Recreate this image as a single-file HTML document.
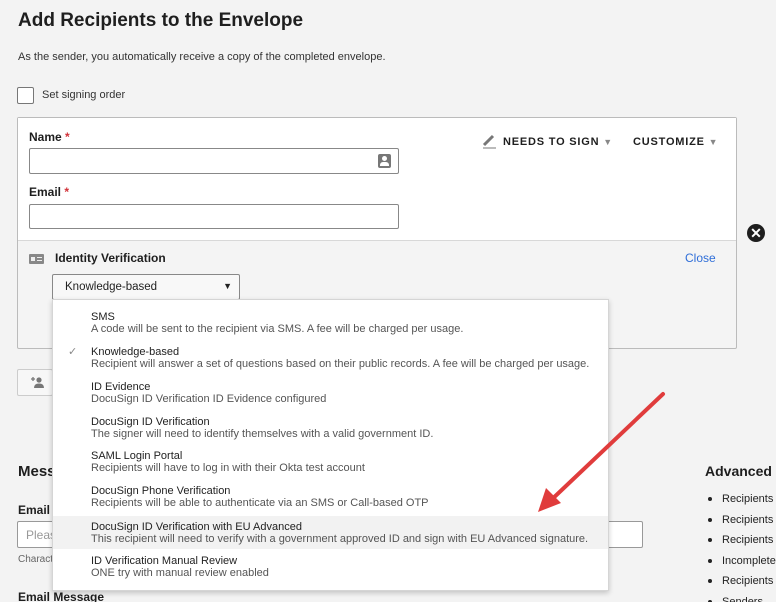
<!DOCTYPE html>
<html><head><style>
*{margin:0;padding:0;box-sizing:border-box}
html,body{width:776px;height:602px;overflow:hidden}
body{background:#f3f3f3;font-family:"Liberation Sans",sans-serif;color:#222;position:relative}
.a{position:absolute}
h1{position:absolute;left:18px;top:10px;font-size:19px;font-weight:bold;color:#1e1e1e}
.lbl{font-size:12px;font-weight:bold;color:#1e1e1e}
.req{color:#d13239}
.inp{position:absolute;background:#fff;border:1px solid #888;border-radius:2px}
.menu{position:absolute;left:52px;top:299px;width:557px;height:292px;background:#fff;border:1px solid #d5d5d5;box-shadow:0 2px 5px rgba(0,0,0,.2)}
.it{position:absolute;left:0;width:555px;height:35px;font-size:11px;color:#333;padding-left:38px;line-height:12px}
.it b{font-weight:normal;color:#222;display:block;padding-top:5px}
.it span{color:#555}
.ul li{font-size:11px;color:#222;margin-bottom:8.5px;list-style:none;position:relative;padding-left:17px}
.ul li:before{content:"";position:absolute;left:3px;top:4px;width:4px;height:4px;border-radius:50%;background:#222}
</style></head><body>
<h1>Add Recipients to the Envelope</h1>
<div class="a" style="left:18px;top:51px;font-size:11px;color:#333">As the sender, you automatically receive a copy of the completed envelope.</div>
<div class="a" style="left:17px;top:87px;width:17px;height:17px;border:1px solid #777;border-radius:2px;background:#fff"></div>
<div class="a" style="left:42px;top:89px;font-size:11px;color:#333">Set signing order</div>

<div class="a" style="left:17px;top:117px;width:720px;height:232px;border:1px solid #bbb;border-radius:2px;background:#f4f4f4">
  <div class="a" style="left:0;top:0;width:718px;height:123px;background:#fff;border-bottom:1px solid #d8d8d8"></div>
</div>
<div class="a lbl" style="left:29px;top:130px">Name <span class="req">*</span></div>
<div class="inp" style="left:29px;top:148px;width:370px;height:26px"></div>
<div class="a" style="left:378px;top:154px;width:13px;height:14px;background:#777;border-radius:2px"><div class="a" style="left:4px;top:2px;width:5px;height:5px;border-radius:50%;background:#fff"></div><div class="a" style="left:2px;top:8px;width:9px;height:4px;border-radius:3px 3px 0 0;background:#fff"></div></div>
<div class="a lbl" style="left:29px;top:185px">Email <span class="req">*</span></div>
<div class="inp" style="left:29px;top:204px;width:370px;height:25px"></div>
<svg class="a" style="left:481px;top:133px" width="16" height="16"><path d="M3 12 L12 3" stroke="#777" stroke-width="3"/><path d="M2 15 H15" stroke="#777" stroke-width="1"/></svg>
<div class="a" style="left:503px;top:136px;font-size:11px;font-weight:bold;letter-spacing:.8px;color:#1e1e1e">NEEDS TO SIGN <span style="color:#888;font-size:9px">▼</span></div>
<div class="a" style="left:633px;top:136px;font-size:11px;font-weight:bold;letter-spacing:.8px;color:#1e1e1e">CUSTOMIZE <span style="color:#888;font-size:9px">▼</span></div>
<div class="a" style="left:747px;top:224px;width:18px;height:18px;border-radius:50%;background:#1e1e1e;color:#fff;font-size:14px;font-weight:bold;text-align:center;line-height:18px">✕</div>
<div class="a" style="left:29px;top:254px;width:15px;height:10px;background:#888;border-radius:1px"><div class="a" style="left:2px;top:3px;width:4px;height:4px;background:#eee"></div><div class="a" style="left:8px;top:3px;width:5px;height:1px;background:#eee"></div><div class="a" style="left:8px;top:6px;width:5px;height:1px;background:#eee"></div></div>
<div class="a lbl" style="left:55px;top:251px">Identity Verification</div>
<div class="a" style="left:685px;top:251px;font-size:12px;color:#2f6ed8">Close</div>
<div class="a" style="left:52px;top:274px;width:188px;height:26px;background:#f8f8f8;border:1px solid #888;border-radius:2px;font-size:11.5px;color:#222;padding:6px 0 0 12px">Knowledge-based<span class="a" style="right:7px;top:6px;font-size:9px">▼</span></div>

<div class="a" style="left:17px;top:369px;width:36px;height:27px;border:1px solid #ccc;background:#f7f7f7;border-radius:2px">
<svg class="a" style="left:12px;top:6px" width="16" height="14"><path d="M1 3 H5 M3 1 V5" stroke="#777" stroke-width="1.3"/><circle cx="9" cy="4" r="2.6" fill="#777"/><path d="M4 12 Q4 7.5 9 7.5 Q14 7.5 14 12 Z" fill="#777"/></svg></div>

<div class="a" style="left:18px;top:463px;font-size:15px;font-weight:bold;color:#1e1e1e">Message to Recipients</div>
<div class="a lbl" style="left:18px;top:503px">Email Subject</div>
<div class="inp" style="left:17px;top:521px;width:626px;height:27px;border-color:#999;font-size:12px;color:#999;padding:6px 0 0 8px">Please</div>
<div class="a" style="left:18px;top:554px;font-size:10px;color:#666">Characters remaining</div>
<div class="a lbl" style="left:18px;top:590px">Email Message</div>

<div class="a" style="left:705px;top:463px;font-size:14px;font-weight:bold;color:#1e1e1e">Advanced</div>
<ul class="ul a" style="left:705px;top:493px;width:100px;white-space:nowrap"><li>Recipients</li><li>Recipients</li><li>Recipients</li><li>Incomplete</li><li>Recipients</li><li>Senders</li></ul>

<div class="menu">
 <div class="it" style="top:6px"><b>SMS</b><span>A code will be sent to the recipient via SMS. A fee will be charged per usage.</span></div>
 <div class="it" style="top:41px"><span class="a" style="left:15px;top:5px;color:#888">✓</span><b>Knowledge-based</b><span>Recipient will answer a set of questions based on their public records. A fee will be charged per usage.</span></div>
 <div class="it" style="top:76px"><b>ID Evidence</b><span>DocuSign ID Verification ID Evidence configured</span></div>
 <div class="it" style="top:111px"><b>DocuSign ID Verification</b><span>The signer will need to identify themselves with a valid government ID.</span></div>
 <div class="it" style="top:145px"><b>SAML Login Portal</b><span>Recipients will have to log in with their Okta test account</span></div>
 <div class="it" style="top:180px"><b>DocuSign Phone Verification</b><span>Recipients will be able to authenticate via an SMS or Call-based OTP</span></div>
 <div class="it" style="top:216px;background:#f2f2f2;height:33px"><b>DocuSign ID Verification with EU Advanced</b><span>This recipient will need to verify with a government approved ID and sign with EU Advanced signature.</span></div>
 <div class="it" style="top:250px"><b>ID Verification Manual Review</b><span>ONE try with manual review enabled</span></div>
</div>
<svg class="a" style="left:0;top:0" width="776" height="602"><path d="M663 394 L548 503" stroke="#e03c3c" stroke-width="4" stroke-linecap="round"/><path d="M538 512 L546 488 L561 503 Z" fill="#e03c3c"/></svg>
</body></html>
